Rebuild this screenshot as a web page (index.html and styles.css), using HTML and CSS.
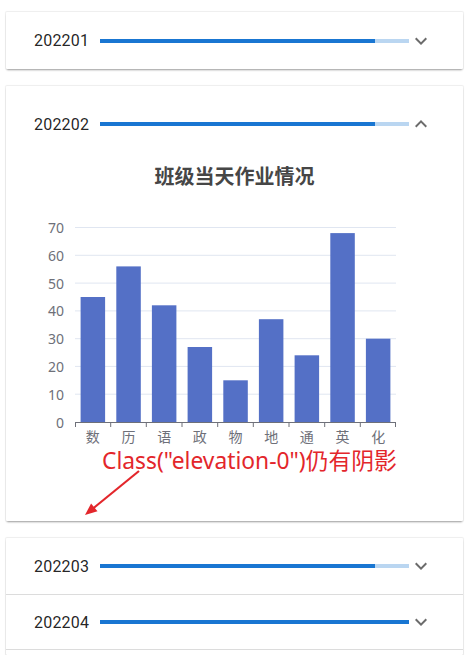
FILE: index.html
```html
<!DOCTYPE html>
<html lang="zh">
<head>
<meta charset="utf-8">
<title>Panels</title>
<link rel="stylesheet" href="styles.css">
</head>
<body>
<div class="page">
  <div class="group">
    <div class="panel">
      <div class="header h57">
        <span class="label">202201</span>
        <div class="track"><div class="fill" style="width:89%"></div></div>
        <svg class="chev" viewBox="0 0 24 24"><path d="M7.41,8.58L12,13.17L16.59,8.58L18,10L12,16L6,10L7.41,8.58Z"/></svg>
      </div>
    </div>
  </div>

  <div class="group">
    <div class="panel">
      <div class="header h76">
        <span class="label">202202</span>
        <div class="track"><div class="fill" style="width:89%"></div></div>
        <svg class="chev" viewBox="0 0 24 24"><path d="M7.41,15.41L12,10.83L16.59,15.41L18,14L12,8L6,14L7.41,15.41Z"/></svg>
      </div>
      <svg class="chart" width="457" height="359" viewBox="0 0 457 359">
        <text class="title" x="228.5" y="13" text-anchor="middle" dominant-baseline="central">班级当天作业情况</text>
        <g class="grid">
          <line x1="69" x2="390" y1="65.5" y2="65.5"/>
          <line x1="69" x2="390" y1="93.3" y2="93.3"/>
          <line x1="69" x2="390" y1="121.1" y2="121.1"/>
          <line x1="69" x2="390" y1="148.9" y2="148.9"/>
          <line x1="69" x2="390" y1="176.7" y2="176.7"/>
          <line x1="69" x2="390" y1="204.4" y2="204.4"/>
          <line x1="69" x2="390" y1="232.2" y2="232.2"/>
        </g>
        <g class="ylab" text-anchor="end" dominant-baseline="central">
          <text x="58" y="65.5">70</text>
          <text x="58" y="93.3">60</text>
          <text x="58" y="121.1">50</text>
          <text x="58" y="148.9">40</text>
          <text x="58" y="176.7">30</text>
          <text x="58" y="204.4">20</text>
          <text x="58" y="232.2">10</text>
          <text x="58" y="260">0</text>
        </g>
        <g class="bars">
          <rect x="74.6" y="135.0" width="24.5" height="125.0"/>
          <rect x="110.3" y="104.4" width="24.5" height="155.6"/>
          <rect x="145.9" y="143.3" width="24.5" height="116.7"/>
          <rect x="181.6" y="185.0" width="24.5" height="75.0"/>
          <rect x="217.3" y="218.3" width="24.5" height="41.7"/>
          <rect x="252.9" y="157.2" width="24.5" height="102.8"/>
          <rect x="288.6" y="193.3" width="24.5" height="66.7"/>
          <rect x="324.3" y="71.1" width="24.5" height="188.9"/>
          <rect x="359.9" y="176.7" width="24.5" height="83.3"/>
        </g>
        <g class="axis">
          <line x1="69" x2="390" y1="260.5" y2="260.5"/>
          <line x1="69.5" x2="69.5" y1="260" y2="265"/>
          <line x1="104.7" x2="104.7" y1="260" y2="265"/>
          <line x1="140.3" x2="140.3" y1="260" y2="265"/>
          <line x1="176" x2="176" y1="260" y2="265"/>
          <line x1="211.7" x2="211.7" y1="260" y2="265"/>
          <line x1="247.3" x2="247.3" y1="260" y2="265"/>
          <line x1="283" x2="283" y1="260" y2="265"/>
          <line x1="318.7" x2="318.7" y1="260" y2="265"/>
          <line x1="354.3" x2="354.3" y1="260" y2="265"/>
          <line x1="389.5" x2="389.5" y1="260" y2="265"/>
        </g>
        <g class="xlab" text-anchor="middle" dominant-baseline="central">
          <text x="86.8" y="274">数</text>
          <text x="122.5" y="274">历</text>
          <text x="158.2" y="274">语</text>
          <text x="193.8" y="274">政</text>
          <text x="229.5" y="274">物</text>
          <text x="265.2" y="274">地</text>
          <text x="300.8" y="274">通</text>
          <text x="336.5" y="274">英</text>
          <text x="372.2" y="274">化</text>
        </g>
        <text class="note" x="96" y="298.5" dominant-baseline="central">Class("elevation-0")仍有阴影</text>
        <line class="arrow" x1="133" y1="309" x2="87" y2="346.5"/>
        <polygon class="arrowhead" points="79,353 85.1,341.5 91.5,349.3"/>
      </svg>
    </div>
  </div>

  <div class="group">
    <div class="panel">
      <div class="header h56">
        <span class="label">202203</span>
        <div class="track"><div class="fill" style="width:89%"></div></div>
        <svg class="chev" viewBox="0 0 24 24"><path d="M7.41,8.58L12,13.17L16.59,8.58L18,10L12,16L6,10L7.41,8.58Z"/></svg>
      </div>
    </div>
    <div class="panel divided">
      <div class="header h54">
        <span class="label">202204</span>
        <div class="track"><div class="fill" style="width:100%"></div></div>
        <svg class="chev" viewBox="0 0 24 24"><path d="M7.41,8.58L12,13.17L16.59,8.58L18,10L12,16L6,10L7.41,8.58Z"/></svg>
      </div>
    </div>
    <div class="panel divided">
      <div class="header h5"></div>
    </div>
  </div>
</div>
</body>
</html>
```

FILE: styles.css
```css
html, body {
  margin: 0;
  padding: 0;
  background: #ffffff;
}

body {
  font-family: Roboto, "Noto Sans", "Noto Sans CJK SC", sans-serif;
  overflow: hidden;
}

.page {
  display: flex;
  flex-direction: column;
  gap: 17px;
  padding: 12px 11px 0 6px;
}

.group {
  background: #ffffff;
  box-shadow: 0 2px 2px -1px rgba(0, 0, 0, 0.35), 0 0 1px 1px rgba(0, 0, 0, 0.07);
  border-radius: 1px;
}

.panel.divided {
  border-top: 1px solid #dcdcdc;
}

.header {
  display: flex;
  align-items: center;
  padding: 0 30px 0 28px;
}

.h57 { height: 57px; }
.h76 { height: 76px; }
.h56 { height: 56px; }
.h54 { height: 54px; }
.h5 { height: 5px; }

.label {
  font-size: 16px;
  color: rgba(0, 0, 0, 0.87);
  margin-right: 11px;
  letter-spacing: 0.2px;
}

.track {
  flex: 1;
  height: 4px;
  background: #bad6f1;
}

.fill {
  height: 100%;
  background: #1976d2;
}

.chev {
  width: 24px;
  height: 24px;
  fill: rgba(0, 0, 0, 0.58);
  flex: none;
}

.chart {
  display: block;
}

.title {
  font-family: "Noto Sans CJK SC", sans-serif;
  font-size: 20px;
  font-weight: 700;
  fill: #464646;
}

.grid line {
  stroke: #e0e6f1;
  stroke-width: 1;
}

.ylab text {
  font-family: "Noto Sans", "Noto Sans CJK SC", sans-serif;
  font-size: 14px;
  fill: #6e7079;
}

.xlab text {
  font-family: "Noto Sans CJK SC", sans-serif;
  font-size: 14px;
  fill: #6e7079;
}

.bars rect {
  fill: #5470c6;
}

.axis line {
  stroke: #6e7079;
  stroke-width: 1;
}

.note {
  font-family: "Noto Sans", "Noto Sans CJK SC", sans-serif;
  font-size: 22.8px;
  fill: #e3262b;
}

.arrow {
  stroke: #e3262b;
  stroke-width: 2.2;
}

.arrowhead {
  fill: #e3262b;
}
```
